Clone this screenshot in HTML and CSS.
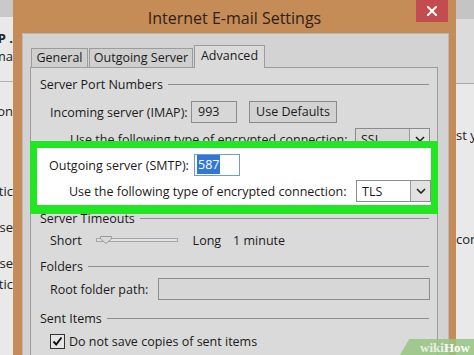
FILE: index.html
```html
<!DOCTYPE html>
<html lang="en">
<head>
  <meta charset="UTF-8">
  <title>Internet E-mail Settings</title>
  <link rel="stylesheet" href="styles.css">
</head>
<body>

<div class="screen">

  <!-- window behind, left edge -->
  <div class="behind left">
    <div class="bg-head"></div>
    <div class="bg-row r1 bold"><span>SMTP .</span></div>
    <div class="bg-row r2"><span>Informa</span></div>
    <div class="bg-rule"></div>
    <div class="bg-row r3"><span>Informacion</span></div>
    <div class="bg-row r4"><span>Autenticatic</span></div>
    <div class="bg-row r5"><span>Usuario de se</span></div>
    <div class="bg-row r6"><span>Nombre de se</span></div>
    <div class="bg-row r7"><span>Autenticatic</span></div>
  </div>

  <div class="middle">
    <div class="top-peek"><span>Cuenta de correo</span></div>

    <div class="dialog">
      <div class="titlebar">
        <div class="title">Internet E-mail Settings</div>
        <div class="close">
          <svg width="12" height="12" viewBox="0 0 12 12"><path d="M2 2 L10 10 M10 2 L2 10" stroke="#fff" stroke-width="2" stroke-linecap="round"/></svg>
        </div>
      </div>

      <div class="client">
        <div class="tabs">
          <div class="tab">General</div>
          <div class="tab">Outgoing Server</div>
          <div class="tab active">Advanced</div>
        </div>

        <div class="panel">
          <div class="group-title">Server Port Numbers</div>

          <div class="row imap">
            <span class="label">Incoming server (IMAP):</span>
            <div class="field port">993</div>
            <div class="button">Use Defaults</div>
          </div>

          <div class="row enc ssl">
            <span class="label">Use the following type of encrypted connection:</span>
            <div class="select grey">
              <span>SSL</span>
              <div class="arrow"><svg width="10" height="6" viewBox="0 0 10 6"><path d="M1 1 L5 5 L9 1" fill="none" stroke="#222" stroke-width="1.6"/></svg></div>
            </div>
          </div>

          <div class="highlight">
            <div class="row smtp">
              <span class="label">Outgoing server (SMTP):</span>
              <div class="field port focus"><span class="sel">587</span></div>
            </div>
            <div class="row enc tls">
              <span class="label">Use the following type of encrypted connection:</span>
              <div class="select">
                <span>TLS</span>
                <div class="arrow"><svg width="10" height="6" viewBox="0 0 10 6"><path d="M1 1 L5 5 L9 1" fill="none" stroke="#222" stroke-width="1.6"/></svg></div>
              </div>
            </div>
          </div>

          <div class="group-title timeouts">Server Timeouts</div>

          <div class="row timeout">
            <span class="label">Short</span>
            <div class="slider">
              <div class="track"></div>
              <svg class="thumb" width="12" height="8" viewBox="0 0 12 8"><path d="M0.5 0.5 H11.5 V3 L6 7.5 L0.5 3 Z" fill="#d9d9d9" stroke="#9a9a9a"/></svg>
            </div>
            <span class="label long">Long</span>
            <span class="label">1 minute</span>
          </div>

          <div class="group-title folders">Folders</div>

          <div class="row root">
            <span class="label">Root folder path:</span>
            <div class="field wide"></div>
          </div>

          <div class="group-title sent">Sent Items</div>

          <div class="row check">
            <div class="checkbox">
              <svg width="13" height="13" viewBox="0 0 13 13"><path d="M2.5 6.5 L5.2 9.5 L10.5 2.5" fill="none" stroke="#111" stroke-width="1.9"/></svg>
            </div>
            <span class="label">Do not save copies of sent items</span>
          </div>
        </div>
      </div>
    </div>
  </div>

  <!-- window behind, right edge -->
  <div class="behind right">
    <div class="bg-head"></div>
    <div class="bg-band"></div>
    <div class="bg-row q1"><span>st <u>y</u>our</span></div>
    <div class="bg-row q2"><span>contraseña</span></div>
  </div>

</div>

<div class="wikihow"><span class="wiki">wiki</span><span class="how">How</span></div>

</body>
</html>
```

FILE: styles.css
```css
* {
  box-sizing: border-box;
}

body {
  margin: 0;
  width: 474px;
  height: 355px;
  overflow: hidden;
  font-family: 'Open Sans', 'Noto Sans', sans-serif;
  font-size: 12px;
  color: #1b1b1b;
  background: #e8e8e8;
  position: relative;
}

.screen {
  display: flex;
  height: 355px;
}

/* windows behind the dialog */
.behind {
  overflow: hidden;
  background: #e9e9e9;
  font-size: 13px;
  color: #222;
}

.behind.left {
  width: 13px;
}

.behind.right {
  width: 18px;
}

.bg-head {
  height: 17px;
  background: #c9c9c9;
}

.behind.right .bg-head {
  height: 19px;
  background: #c4c4c4;
}

.bg-band {
  height: 65px;
  background: #dcdcdc;
  border-bottom: 1px solid #a8a8a8;
}

.bg-row {
  display: flex;
  justify-content: flex-end;
  white-space: nowrap;
  height: 16px;
  line-height: 16px;
}

.behind.right .bg-row {
  justify-content: flex-start;
}

.bg-row.bold {
  font-weight: bold;
}

.r1 { margin-top: 13px; }
.r2 { margin-top: 2px; }

.bg-rule {
  margin-top: 17px;
  border-top: 1px solid #b0b0b0;
}

.r3 { margin-top: 21px; }
.r4 { margin-top: 64px; }
.r5 { margin-top: 20px; }
.r6 { margin-top: 20px; }
.r7 { margin-top: 5px; }

.q1 { margin-top: 43px; }
.q2 { margin-top: 88px; }

/* middle column */
.middle {
  width: 443px;
  display: flex;
  flex-direction: column;
}

.top-peek {
  height: 3px;
  background: #c8c8c8;
  overflow: hidden;
  display: flex;
  justify-content: center;
  align-items: flex-end;
}

.top-peek span {
  font-size: 16px;
  line-height: 16px;
  margin-bottom: -7px;
  margin-left: 40px;
  color: #333;
  letter-spacing: 1px;
}

.dialog {
  flex: 1;
  background: #c68c58;
  display: flex;
  flex-direction: column;
}

.titlebar {
  height: 33px;
  display: flex;
  position: relative;
  justify-content: center;
  align-items: center;
}

.title {
  font-size: 16px;
  color: #2e2112;
  padding-top: 2px;
}

.close {
  position: absolute;
  top: 0;
  right: 8px;
  width: 32px;
  height: 22px;
  background: #c24c4f;
  display: flex;
  align-items: center;
  justify-content: center;
}

.client {
  flex: 1;
  margin: 0 7px 0 9px;
  background: #d3d3d3;
  border: 1px solid #b9b9b9;
  border-bottom: none;
  padding: 11px 10px 0 7px;
}

.tabs {
  display: flex;
  align-items: flex-end;
  margin-left: 1px;
  height: 22px;
  position: relative;
  z-index: 2;
}

.tab {
  height: 19px;
  line-height: 18px;
  border: 1px solid #9c9c9c;
  border-bottom: none;
  background: #cfcfcf;
  margin-right: 1px;
  font-size: 12.5px;
  text-align: center;
  white-space: nowrap;
}

.tab:nth-child(1) { width: 57px; }
.tab:nth-child(2) { width: 104px; }

.tab.active {
  height: 23px;
  width: 71px;
  margin-bottom: -1px;
  background: #dadada;
  line-height: 19px;
}

.panel {
  border: 1px solid #9c9c9c;
  background: #dadada;
  height: 300px;
  padding-top: 8px;
}

.group-title {
  display: flex;
  align-items: center;
  height: 16px;
  padding: 0 8px 0 9px;
  font-size: 12.5px;
  white-space: nowrap;
}

.group-title::after {
  content: "";
  flex: 1;
  border-top: 1px solid #8e8e8e;
  margin-left: 5px;
}

.row {
  display: flex;
  align-items: center;
  padding-left: 19px;
  font-size: 12.5px;
  white-space: nowrap;
}

.field {
  border: 1px solid #8c8c8c;
  background: #d7d7d7;
  height: 22px;
  line-height: 20px;
  padding-left: 6px;
}

.port {
  width: 46px;
}

.imap {
  margin-top: 9px;
  height: 22px;
}

.imap .label {
  width: 141px;
}

.button {
  margin-left: 12px;
  height: 22px;
  width: 88px;
  border: 1px solid #8a8a8a;
  background: #d2d2d2;
  text-align: center;
  line-height: 20px;
}

.enc {
  padding-left: 39px;
}

.ssl {
  margin-top: 5px;
  height: 22px;
}

.select {
  margin-left: auto;
  margin-right: 7px;
  width: 75px;
  height: 22px;
  border: 1px solid #8c8c8c;
  background: #ffffff;
  display: flex;
  align-items: center;
  padding-left: 5px;
}

.select.grey {
  background: #d7d7d7;
}

.select span {
  flex: 1;
}

.arrow {
  width: 20px;
  height: 20px;
  border-left: 1px solid #9a9a9a;
  background: #e2e2e2;
  display: flex;
  align-items: center;
  justify-content: center;
}

/* green annotation box */
.highlight {
  position: relative;
  z-index: 3;
  margin: -9px -1px 0 -1px;
  border: 7px solid #22e524;
  border-bottom-width: 9px;
  background: #ffffff;
  padding: 6px 0 3px 0;
}

.highlight .row {
  padding-left: 12px;
}

.highlight .enc {
  padding-left: 32px;
}

.smtp {
  height: 22px;
}

.smtp .label {
  width: 145px;
}

.focus {
  background: #ffffff;
  border-color: #6f9bd3;
  padding-left: 2px;
}

.sel {
  background: #3377d6;
  color: #ffffff;
  padding: 1px 1px;
}

.tls {
  margin-top: 4px;
  height: 22px;
}

.tls .select {
  margin-right: 0;
}

.timeouts {
  margin-top: -4px;
}

.timeout {
  margin-top: 4px;
  height: 20px;
}

.slider {
  position: relative;
  width: 82px;
  margin-left: 14px;
  height: 14px;
}

.track {
  margin-top: 5px;
  height: 4px;
  border: 1px solid #a6a6a6;
  background: #e2e2e2;
}

.thumb {
  position: absolute;
  left: 4px;
  top: 3px;
}

.long {
  margin-left: 15px;
  margin-right: 12px;
}

.folders {
  margin-top: 8px;
}

.root {
  margin-top: 4px;
  height: 22px;
}

.root .label {
  width: 108px;
}

.wide {
  width: 272px;
}

.sent {
  margin-top: 10px;
}

.check {
  margin-top: 7px;
  height: 16px;
}

.checkbox {
  width: 15px;
  height: 15px;
  border: 1px solid #333;
  background: #e6e6e6;
  display: flex;
  align-items: center;
  justify-content: center;
  margin-right: 4px;
}

/* watermark */
.wikihow {
  position: absolute;
  right: -4px;
  bottom: -2px;
  height: 18px;
  padding: 0 8px 0 16px;
  background: rgba(150, 196, 128, 0.85);
  transform: skewX(-30deg);
  font-family: 'Liberation Serif', serif;
  font-weight: bold;
  font-size: 13px;
  line-height: 18px;
}

.wikihow span {
  display: inline-block;
  transform: skewX(30deg);
}

.wiki {
  color: #e9efe4;
}

.how {
  color: #ffffff;
}
```
